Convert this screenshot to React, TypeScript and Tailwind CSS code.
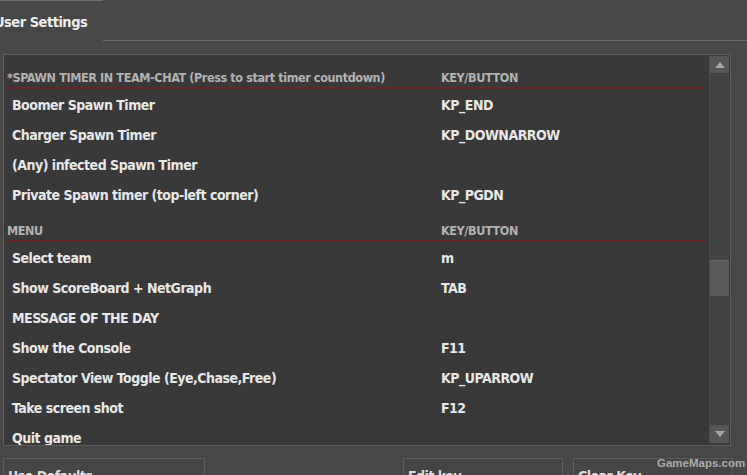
import React from "react";

type Row =
  | { kind: "header"; label: string; key: string }
  | { kind: "item"; label: string; key: string };

const rows: Row[] = [
  { kind: "header", label: "*SPAWN TIMER IN TEAM-CHAT (Press to start timer countdown)", key: "KEY/BUTTON" },
  { kind: "item", label: "Boomer Spawn Timer", key: "KP_END" },
  { kind: "item", label: "Charger Spawn Timer", key: "KP_DOWNARROW" },
  { kind: "item", label: "(Any) infected Spawn Timer", key: "" },
  { kind: "item", label: "Private Spawn timer (top-left corner)", key: "KP_PGDN" },
  { kind: "header", label: "MENU", key: "KEY/BUTTON" },
  { kind: "item", label: "Select team", key: "m" },
  { kind: "item", label: "Show ScoreBoard + NetGraph", key: "TAB" },
  { kind: "item", label: "MESSAGE OF THE DAY", key: "" },
  { kind: "item", label: "Show the Console", key: "F11" },
  { kind: "item", label: "Spectator View Toggle (Eye,Chase,Free)", key: "KP_UPARROW" },
  { kind: "item", label: "Take screen shot", key: "F12" },
  { kind: "item", label: "Quit game", key: "" },
];

export default function App() {
  return (
    <div
      className="relative w-[747px] h-[475px] overflow-hidden bg-[#474747] text-[#e8e8e8]"
      style={{ fontFamily: '"DejaVu Sans Condensed", "DejaVu Sans", sans-serif' }}
    >
      {/* Tab row */}
      <div className="flex h-[41px]">
        <div className="w-[103px] border-t border-[#6e6e6e] flex items-center pt-[2px]">
          <span className="-ml-[6px] text-[14.5px] font-bold tracking-[-0.5px] text-[#eeeeee] leading-none whitespace-nowrap">
            User Settings
          </span>
        </div>
        <div className="flex-1 border-b border-[#6a6a6a]" />
      </div>

      {/* List panel */}
      <div className="mt-[13px] ml-[3px] w-[728px] h-[392px] border border-[#5c5c5c] bg-[#393939] flex">
        <div className="flex-1 pt-[1px] overflow-hidden">
          {rows.map((r, i) =>
            r.kind === "header" ? (
              <div key={i} className="h-[33px] pt-[14px] pl-[3px] pr-[3px]">
                <div className="flex h-[19px] pb-[1px] items-center border-b-2 border-[#642626] text-[12.5px] font-bold tracking-[-0.4px] text-[#b2b2b2]">
                  <span className="w-[434px] whitespace-nowrap">{r.label}</span>
                  <span>{r.key}</span>
                </div>
              </div>
            ) : (
              <div key={i} className="h-[30px] flex items-center pt-[2px] pl-[8px] text-[14px] font-bold tracking-[-0.5px]">
                <span className="w-[429px] whitespace-nowrap">{r.label}</span>
                <span>{r.key}</span>
              </div>
            )
          )}
        </div>
        {/* Scrollbar */}
        <div className="w-[20px] mr-px mt-px mb-[2px] bg-[#434343] flex flex-col border-l border-[#4b4b4b]">
          <div className="h-[17px] bg-[#555555] flex items-center justify-center">
            <svg width="10" height="6" viewBox="0 0 10 6">
              <path d="M5 0 L10 6 L0 6 Z" fill="#a9a9a9" />
            </svg>
          </div>
          <div className="h-[187px]" />
          <div className="h-[36px] bg-[#5a5a5a] border-t border-[#6a6a6a]" />
          <div className="flex-1" />
          <div className="h-[18px] bg-[#555555] flex items-center justify-center">
            <svg width="10" height="6" viewBox="0 0 10 6">
              <path d="M0 0 L10 0 L5 6 Z" fill="#a9a9a9" />
            </svg>
          </div>
        </div>
      </div>

      {/* Buttons */}
      <div className="flex mt-[12px] ml-[3px]">
        <div className="w-[202px] h-[30px] border border-[#5c5c5c] bg-[#454545] pl-[4px] pt-[7px] text-[14px] font-bold tracking-[-0.5px] text-[#dddddd] whitespace-nowrap">
          Use Defaults
        </div>
        <div className="ml-[198px] w-[160px] h-[30px] border border-[#5c5c5c] bg-[#454545] pl-[4px] pt-[7px] text-[14px] font-bold tracking-[-0.5px] text-[#dddddd] whitespace-nowrap">
          Edit key
        </div>
        <div className="ml-[10px] w-[160px] h-[30px] border border-[#5c5c5c] bg-[#454545] pl-[4px] pt-[7px] text-[14px] font-bold tracking-[-0.5px] text-[#dddddd] whitespace-nowrap">
          Clear Key
        </div>
      </div>

      {/* Watermark */}
      <div
        className="absolute left-[657px] top-[455px] text-[11.5px] font-bold text-[#c8c8c8]/80"
        style={{ fontFamily: '"Liberation Sans Narrow", "Liberation Sans", sans-serif' }}
      >
        GameMaps.com
      </div>
    </div>
  );
}
